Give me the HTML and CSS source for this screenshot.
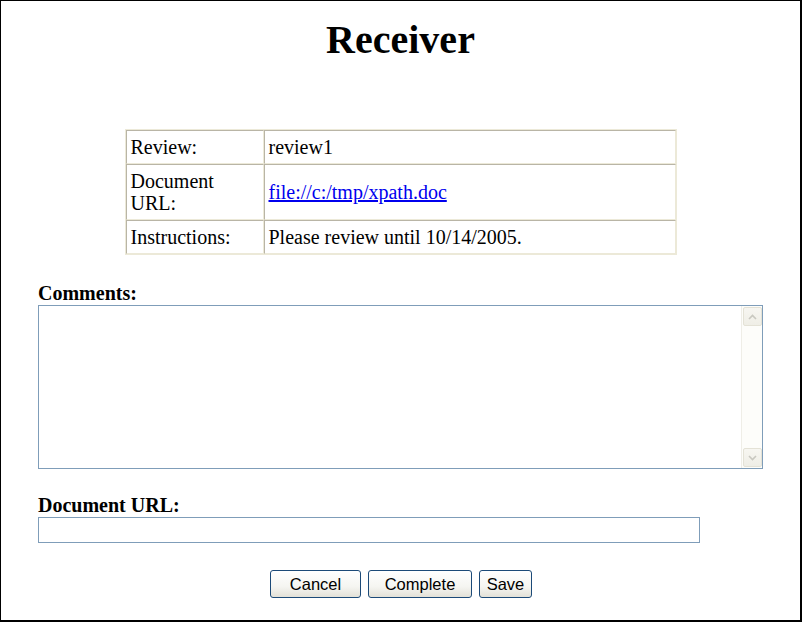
FILE: index.html
```html
<!DOCTYPE html>
<html>
<head>
<meta charset="utf-8">
<title>Receiver</title>
<link rel="stylesheet" href="styles.css">
</head>
<body>
<div class="frame">
  <h1 class="title">Receiver</h1>
  <table class="info">
    <tr>
      <td class="key">Review:</td>
      <td class="val">review1</td>
    </tr>
    <tr>
      <td class="key">Document<br>URL:</td>
      <td class="val"><a href="#">file://c:/tmp/xpath.doc</a></td>
    </tr>
    <tr>
      <td class="key">Instructions:</td>
      <td class="val">Please review until 10/14/2005.</td>
    </tr>
  </table>
  <div class="content">
    <label class="field-label" for="comments">Comments:</label>
    <div class="textarea-box">
      <textarea id="comments" class="comments"></textarea>
      <div class="scrollbar">
        <div class="sb-btn">
          <svg width="9" height="6" viewBox="0 0 9 6"><path d="M1 5 L4.5 1.5 L8 5" fill="none" stroke="#c9c8c0" stroke-width="1.6"/></svg>
        </div>
        <div class="sb-btn">
          <svg width="9" height="6" viewBox="0 0 9 6"><path d="M1 1 L4.5 4.5 L8 1" fill="none" stroke="#c9c8c0" stroke-width="1.6"/></svg>
        </div>
      </div>
    </div>
    <label class="field-label url-label" for="docurl">Document URL:</label>
    <input id="docurl" class="url-input" type="text">
    <div class="buttons">
      <button class="btn btn-cancel">Cancel</button>
      <button class="btn btn-complete">Complete</button>
      <button class="btn btn-save">Save</button>
    </div>
  </div>
</div>
</body>
</html>
```

FILE: styles.css
```css
html, body {
  margin: 0;
  padding: 0;
  background: #ffffff;
}

.frame {
  box-sizing: border-box;
  width: 802px;
  height: 622px;
  border-style: solid;
  border-color: #000000;
  border-width: 1px 2px 2px 1px;
  padding-top: 16px;
  font-family: "Liberation Serif", "Times New Roman", serif;
  font-size: 20px;
  color: #000000;
  display: flex;
  flex-direction: column;
  align-items: center;
}

.title {
  margin: 0;
  font-size: 40px;
  font-weight: bold;
  line-height: 46px;
  text-align: center;
}

.info {
  margin-top: 66px;
  width: 552px;
  border-collapse: separate;
  border-spacing: 0;
  border: 1px solid #ece9d8;
  font-size: 20px;
  line-height: 22px;
}

.info td {
  padding: 5px 4px;
  border: 1px solid;
  border-color: #b9b5a6 #ece9d8 #ece9d8 #b9b5a6;
  vertical-align: middle;
  text-align: left;
}

.info .key {
  width: 128px;
}

.info a {
  color: #0000ee;
  text-decoration: underline;
}

.content {
  width: 725px;
  display: flex;
  flex-direction: column;
  align-items: flex-start;
}

.field-label {
  display: block;
  font-weight: bold;
  font-size: 20px;
  line-height: 23px;
  margin-top: 27px;
}

.url-label {
  margin-top: 25px;
}

.textarea-box {
  box-sizing: border-box;
  width: 725px;
  height: 164px;
  border: 1px solid #7f9db9;
  display: flex;
  background: #ffffff;
}

.comments {
  flex: 1;
  border: none;
  outline: none;
  resize: none;
  margin: 0;
  padding: 2px;
  font-family: "Liberation Sans", Arial, sans-serif;
  font-size: 14px;
  background: #ffffff;
}

.scrollbar {
  box-sizing: border-box;
  width: 21px;
  border-left: 1px solid #efeee7;
  background: #fdfdfa;
  padding: 1px;
  display: flex;
  flex-direction: column;
  justify-content: space-between;
}

.sb-btn {
  box-sizing: border-box;
  width: 19px;
  height: 19px;
  border: 1px solid #e4e2d6;
  border-radius: 2px;
  background: linear-gradient(#f7f6f1, #efeee6);
  display: flex;
  align-items: center;
  justify-content: center;
}

.url-input {
  box-sizing: border-box;
  width: 662px;
  height: 26px;
  margin: 0;
  border: 1px solid #7f9db9;
  padding: 2px 3px;
  font-family: "Liberation Sans", Arial, sans-serif;
  font-size: 14px;
  outline: none;
}

.buttons {
  align-self: stretch;
  display: flex;
  justify-content: center;
  gap: 7px;
  margin-top: 27px;
  padding-left: 1px;
}

.btn {
  box-sizing: border-box;
  height: 28px;
  margin: 0;
  padding: 0;
  border: 1px solid #1c4a78;
  border-radius: 3px;
  background: linear-gradient(#ffffff 0%, #f5f5f1 60%, #e3e1d7 100%);
  font-family: "Liberation Sans", Arial, sans-serif;
  font-size: 16.5px;
  color: #000000;
  text-align: center;
}

.btn-cancel { width: 91px; }
.btn-complete { width: 104px; }
.btn-save { width: 53px; }
```
